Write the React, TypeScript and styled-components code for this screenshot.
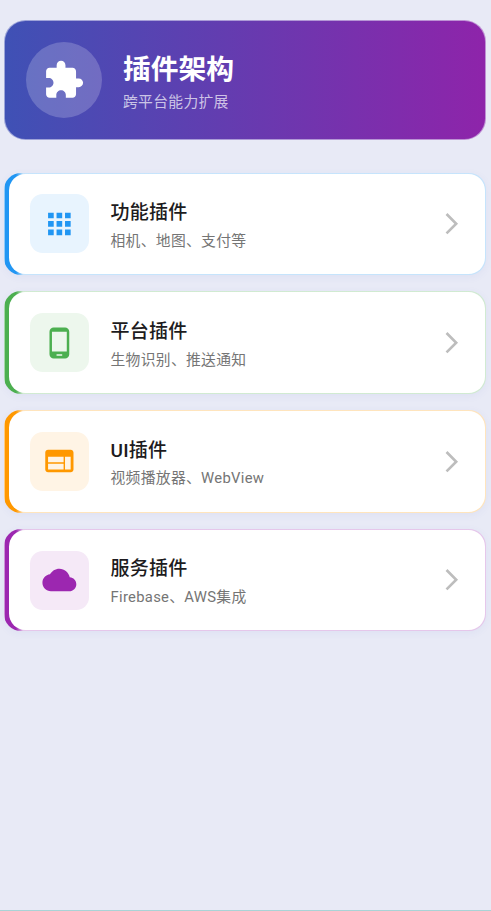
import React from 'react';
import styled, { createGlobalStyle } from 'styled-components';

const GlobalStyle = createGlobalStyle`
  * { box-sizing: border-box; }
  body {
    margin: 0;
    background: #e8eaf6;
    font-family: Roboto, "Noto Sans CJK SC", sans-serif;
  }
`;

const Page = styled.main`
  display: flex;
  flex-direction: column;
  height: 911px;
  padding: 20px 5px 0 4px;
  background: #e8eaf6;
  border-bottom: 1px solid #a9d3d6;
  overflow: hidden;
`;

const Header = styled.header`
  display: flex;
  align-items: center;
  gap: 21px;
  flex: none;
  height: 120px;
  padding-left: 21px;
  border: 1px solid transparent;
  border-radius: 21.5px;
  background:
    linear-gradient(90deg, #3f51b5, #8e24aa) padding-box,
    linear-gradient(90deg, #3f51b573, #8e24aa73) border-box;
  color: #fff;
`;

const HeaderBadge = styled.div`
  display: grid;
  place-items: center;
  width: 76px;
  height: 76px;
  border-radius: 50%;
  background: rgba(255, 255, 255, 0.2);
`;

const HeaderText = styled.div`
  display: flex;
  flex-direction: column;
  padding-top: 4px;
`;

const HeaderTitle = styled.h1`
  margin: 0;
  font-size: 27.75px;
  line-height: 38px;
  font-weight: 700;
`;

const HeaderSubtitle = styled.p`
  margin: 3.5px 0 0;
  font-size: 14.8px;
  line-height: 21px;
  letter-spacing: 0.3px;
  color: rgba(255, 255, 255, 0.7);
`;

const PluginList = styled.section`
  display: flex;
  flex-direction: column;
  gap: 16.2px;
  margin-top: 32.7px;
`;

const Card = styled.article<{ $color: string }>`
  display: flex;
  height: 102.5px;
  padding: 1px 1px 1px 5px;
  border-radius: 17px;
  background: linear-gradient(90deg, ${p => p.$color}80 1px, ${p => p.$color} 1px, ${p => p.$color} 12px, ${p => p.$color}42 19px), #fff;
  box-shadow: 0 2px 9px rgba(63, 81, 181, 0.06);
`;

const CardBody = styled.div`
  display: flex;
  align-items: center;
  flex: 1;
  padding: 0 20.5px 0 21px;
  border-radius: 16.5px;
  background: #fff;
`;

const IconTile = styled.div<{ $tint: string }>`
  display: grid;
  place-items: center;
  flex: none;
  width: 59px;
  height: 59px;
  padding-right: 1px;
  border-radius: 12.7px;
  background: ${p => p.$tint};
`;

const CardText = styled.div`
  flex: 1;
  padding: 4px 0 0 21.5px;
`;

const CardTitle = styled.h2`
  margin: -0.7px 0 0;
  font-size: 19.04px;
  line-height: 27px;
  font-weight: 500;
  letter-spacing: 0.22px;
  color: #1d1b20;
`;

const CardSubtitle = styled.p`
  margin: 3.7px 0 0;
  font-size: 14.8px;
  line-height: 22px;
  letter-spacing: 0.3px;
  color: #757575;
`;

type IconProps = { path: string; size: number; color: string; shift?: number };

const Icon = ({ path, size, color, shift = 0 }: IconProps) => (
  <svg
    width={size}
    height={size}
    viewBox={`${-shift} 0 24 24`}
    fill={color}
    overflow="visible"
    aria-hidden="true"
  >
    <path d={path} />
  </svg>
);

const icons = {
  extension:
    'M20.5 11H19V7c0-1.1-.9-2-2-2h-4V3.5C13 2.12 11.88 1 10.5 1S8 2.12 8 3.5V5H4c-1.1 0-1.99.9-1.99 2v3.8H3.5c1.49 0 2.7 1.21 2.7 2.7s-1.21 2.7-2.7 2.7H2V20c0 1.1.9 2 2 2h3.8v-1.5c0-1.49 1.21-2.7 2.7-2.7 1.49 0 2.7 1.21 2.7 2.7V22H17c1.1 0 2-.9 2-2v-4h1.5c1.38 0 2.5-1.12 2.5-2.5S21.88 11 20.5 11z',
  apps: 'M4 8h4V4H4v4zm6 12h4v-4h-4v4zm-6 0h4v-4H4v4zm0-6h4v-4H4v4zm6 0h4v-4h-4v4zm6-10v4h4V4h-4zm-6 4h4V4h-4v4zm6 6h4v-4h-4v4zm0 6h4v-4h-4v4z',
  phone:
    'M16 1H8C6.34 1 5 2.34 5 4v16c0 1.66 1.34 3 3 3h8c1.66 0 3-1.34 3-3V4c0-1.66-1.34-3-3-3zm-2 20h-4v-1h4v1zm3.25-3H6.75V4h10.5v14z',
  web: 'M20 4H4c-1.1 0-1.99.9-1.99 2L2 18c0 1.1.9 2 2 2h16c1.1 0 2-.9 2-2V6c0-1.1-.9-2-2-2zm-5 14H4v-4h11v4zm0-5H4V9h11v4zm5 5h-4V9h4v9z',
  cloud:
    'M19.35 10.04C18.67 6.59 15.64 4 12 4 9.11 4 6.6 5.64 5.35 8.04 2.34 8.36 0 10.91 0 14c0 3.31 2.69 6 6 6h13c2.76 0 5-2.24 5-5 0-2.64-2.05-4.78-4.65-4.96z',
  forward: 'M6.23 20.23 8 22l10-10L8 2 6.23 3.77 14.46 12z',
};

const plugins = [
  { title: '功能插件', subtitle: '相机、地图、支付等', color: '#2196f3', tint: '#e8f4fe', icon: icons.apps },
  { title: '平台插件', subtitle: '生物识别、推送通知', color: '#4caf50', tint: '#edf7ed', icon: icons.phone },
  { title: 'UI插件', subtitle: '视频播放器、WebView', color: '#ff9800', tint: '#fff4e5', icon: icons.web },
  { title: '服务插件', subtitle: 'Firebase、AWS集成', color: '#9c27b0', tint: '#f5e9f7', icon: icons.cloud },
];

export default function App() {
  return (
    <>
      <GlobalStyle />
      <Page>
        <Header>
          <HeaderBadge>
            <Icon path={icons.extension} size={42.3} color="#fff" shift={-0.25} />
          </HeaderBadge>
          <HeaderText>
            <HeaderTitle>插件架构</HeaderTitle>
            <HeaderSubtitle>跨平台能力扩展</HeaderSubtitle>
          </HeaderText>
        </Header>
        <PluginList>
          {plugins.map(p => (
            <Card key={p.title} $color={p.color}>
              <CardBody>
                <IconTile $tint={p.tint}>
                  <Icon path={p.icon} size={33.9} color={p.color} shift={0.3} />
                </IconTile>
                <CardText>
                  <CardTitle>{p.title}</CardTitle>
                  <CardSubtitle>{p.subtitle}</CardSubtitle>
                </CardText>
                <Icon path={icons.forward} size={25.4} color="#bdbdbd" />
              </CardBody>
            </Card>
          ))}
        </PluginList>
      </Page>
    </>
  );
}
